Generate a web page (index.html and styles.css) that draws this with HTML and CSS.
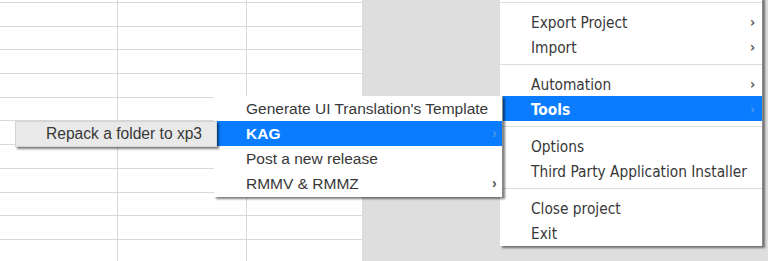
FILE: index.html
```html
<!DOCTYPE html>
<html>
<head>
<meta charset="utf-8">
<link rel="stylesheet" href="styles.css">
</head>
<body>
<div class="screen">
  <div class="grid">
    <div class="c"></div><div class="c"></div><div class="c"></div>
    <div class="c"></div><div class="c"></div><div class="c"></div>
    <div class="c"></div><div class="c"></div><div class="c"></div>
    <div class="c"></div><div class="c"></div><div class="c"></div>
    <div class="c"></div><div class="c"></div><div class="c"></div>
    <div class="c"></div><div class="c"></div><div class="c"></div>
    <div class="c"></div><div class="c"></div><div class="c"></div>
    <div class="c"></div><div class="c"></div><div class="c"></div>
    <div class="c"></div><div class="c"></div><div class="c"></div>
    <div class="c"></div><div class="c"></div><div class="c"></div>
    <div class="c"></div><div class="c"></div><div class="c"></div>
    <div class="c"></div><div class="c"></div><div class="c"></div>
  </div>
  <div class="backdrop"></div>

  <ul class="menu main-menu">
    <li class="sep"></li>
    <li class="item has-sub">Export Project<span class="chev">›</span></li>
    <li class="item has-sub">Import<span class="chev">›</span></li>
    <li class="sep"></li>
    <li class="item has-sub">Automation<span class="chev">›</span></li>
    <li class="item has-sub active">Tools<span class="chev">›</span></li>
    <li class="sep"></li>
    <li class="item">Options</li>
    <li class="item">Third Party Application Installer</li>
    <li class="sep"></li>
    <li class="item">Close project</li>
    <li class="item">Exit</li>
  </ul>

  <ul class="menu sub-menu">
    <li class="item">Generate UI Translation's Template</li>
    <li class="item has-sub active">KAG<span class="chev">›</span></li>
    <li class="item">Post a new release</li>
    <li class="item has-sub">RMMV &amp; RMMZ<span class="chev">›</span></li>
  </ul>

  <ul class="menu leaf-menu">
    <li class="item">Repack a folder to xp3</li>
  </ul>
</div>
</body>
</html>
```

FILE: styles.css
```css
html, body {
  margin: 0;
  padding: 0;
}
body {
  width: 768px;
  height: 261px;
  overflow: hidden;
  background: #dedede;
}
.screen {
  position: relative;
  display: flex;
  width: 768px;
  height: 261px;
  overflow: hidden;
}
.grid {
  width: 362px;
  flex: none;
  display: grid;
  grid-template-columns: 118px 129px 115px;
  grid-auto-rows: 23.7px;
  margin-top: -20.7px;
  background: #fff;
  align-self: flex-start;
}
.grid .c {
  box-sizing: border-box;
  border-bottom: 1px solid #d9d9d9;
  border-right: 1px solid #d9d9d9;
}
.grid .c:nth-child(3n) {
  border-right: none;
}
.backdrop {
  flex: 1;
  background: #dedede;
}

.menu {
  list-style: none;
  margin: 0;
  padding: 0;
  position: absolute;
  background: #fff;
  color: #383838;
  box-sizing: border-box;
}
.menu .item {
  position: relative;
  height: 25px;
  line-height: 25px;
  white-space: nowrap;
}
.menu .sep {
  height: 12px;
  position: relative;
}
.menu .sep::after {
  content: "";
  position: absolute;
  left: 0;
  right: 0;
  top: 5px;
  border-top: 1px solid #dcdcdc;
}
.menu .chev {
  position: absolute;
  top: 0;
  font-weight: bold;
  color: #555;
  font-size: 14px;
}
.menu .active {
  background: #0a7cff;
  color: #fff;
  font-weight: bold;
}
.menu .active .chev {
  color: #4b96e8;
}

.main-menu {
  left: 500px;
  top: -3px;
  width: 263px;
  padding-bottom: 1px;
  font-family: "DejaVu Sans Condensed", "DejaVu Sans", sans-serif;
  font-stretch: condensed;
  font-size: 15.3px;
  border-right: 1px solid #8a8a8a;
  box-shadow: 2px 2px 2px rgba(0, 0, 0, 0.5);
}
.main-menu .item {
  padding-left: 31px;
  line-height: 28px;
}
.main-menu .chev {
  left: 250px;
  line-height: 26px;
}

.sub-menu {
  left: 214px;
  top: 96px;
  width: 289px;
  padding-bottom: 1px;
  font-family: "Liberation Sans", Arial, sans-serif;
  font-size: 15.5px;
  border-right: 1px solid #8a8a8a;
  box-shadow: 2px 2px 2px rgba(0, 0, 0, 0.5);
}
.sub-menu .item {
  padding-left: 32px;
}
.sub-menu .chev {
  left: 278px;
}

.leaf-menu {
  left: 15px;
  top: 121px;
  width: 202px;
  background: #e9e9e9;
  border: 1px solid #d4d4d4;
  font-family: "Liberation Sans", Arial, sans-serif;
  font-size: 15.6px;
  box-shadow: 2px 2px 2px rgba(0, 0, 0, 0.5);
}
.leaf-menu .item {
  height: 24px;
  line-height: 24px;
  padding-left: 30px;
}
```
